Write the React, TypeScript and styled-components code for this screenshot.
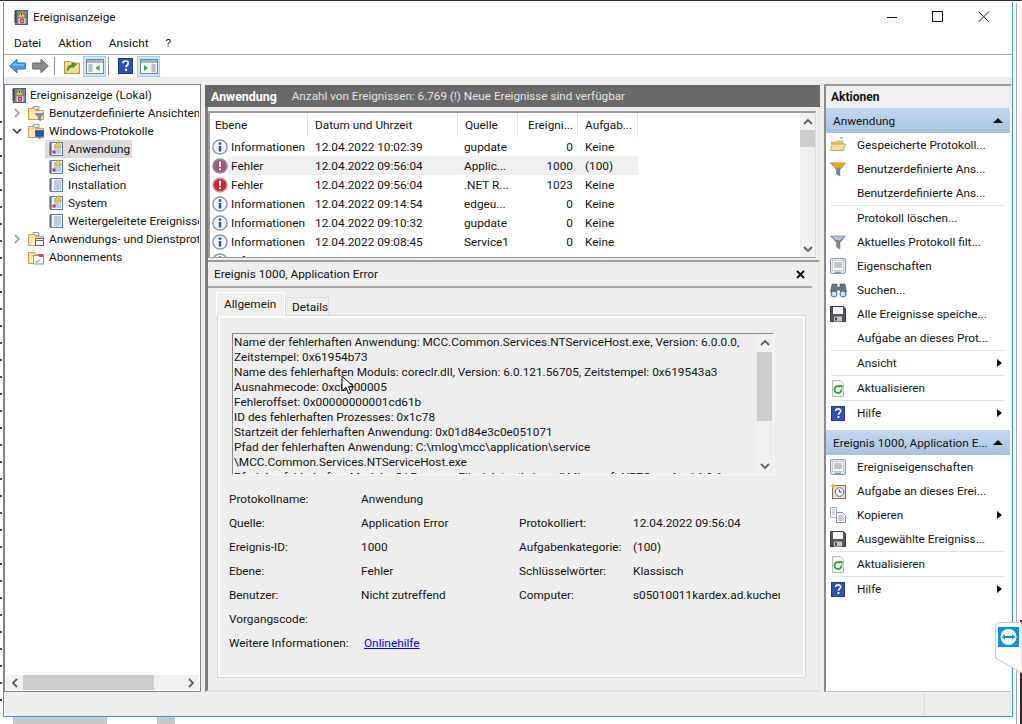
import React from "react";
import styled, { createGlobalStyle } from "styled-components";

const GlobalStyle = createGlobalStyle`
  html, body {
    margin: 0;
    background: #fff;
  }
  body {
    font-family: "Roboto", "Liberation Sans", sans-serif;
    font-size: 11.8px;
    color: #141414;
  }
`;

/* ---------- icons ---------- */

const Svg = styled.svg`
  flex: none;
  display: block;
`;

const LogIcon = ({ alert }: { alert?: boolean }) => (
  <Svg width="16" height="16" viewBox="0 0 16 16">
    <rect x="2.5" y="1.5" width="12" height="13" fill="#eef3fb" stroke="#5f7ea8" />
    <path d="M1 3h3M1 5h3M1 7h3M1 9h3M1 11h3M1 13h3" stroke="#555" />
    <path d="M6 4h7M6 6h7M6 8h7M6 10h7M6 12h7" stroke="#86a8d4" />
    {alert && (
      <>
        <path d="M10 0.5l3.500 5.500h-7z" fill="#f7d23c" stroke="#c79a1a" strokeWidth=".6" />
        <rect x="4.500" y="9.500" width="3" height="3" fill="#d0333f" />
      </>
    )}
  </Svg>
);

const ViewerIcon = () => (
  <Svg width="16" height="17" viewBox="0 0 16 17">
    <rect x="2.5" y="1.5" width="12" height="14" fill="#6f84a8" stroke="#4a5f82" />
    <path d="M1 3h3M1 5h3M1 7h3M1 9h3M1 11h3M1 13h3" stroke="#333" />
    <path d="M8.5 2l3.5 6H5z" fill="#f6cf2f" stroke="#a9851a" strokeWidth=".5" />
    <rect x="8" y="3.8" width="1" height="2.6" fill="#333" />
    <rect x="5.5" y="9.5" width="7" height="5" fill="#e6dfe0" />
    <circle cx="9" cy="12" r="2.4" fill="#cf3040" />
    <rect x="7.8" y="11.6" width="2.4" height=".9" fill="#fff" />
  </Svg>
);

const FolderBase = () => (
  <>
    <path d="M0.5 3.5h6l1.5 2h7.5v9H0.5z" fill="#f7dd94" stroke="#c6a654" />
    <path d="M1.5 7h13v6.5h-13z" fill="#fdeeb9" />
  </>
);

const FolderFilterIcon = () => (
  <Svg width="16" height="16" viewBox="0 0 16 16">
    <path d="M5 1.5h6v3H5z" fill="#dfe8f3" stroke="#8aa0bc" />
    <FolderBase />
    <path d="M7 8.5h8.5L12.5 12v3.5l-2-1V12z" fill="#7d93ad" stroke="#56697f" strokeWidth=".6" />
  </Svg>
);

const FolderLogsIcon = () => (
  <Svg width="16" height="16" viewBox="0 0 16 16">
    <path d="M5 1.5h6v3H5z" fill="#dfe8f3" stroke="#8aa0bc" />
    <FolderBase />
    <rect x="7.5" y="7.5" width="8" height="6" fill="#1f56c4" stroke="#444" strokeWidth=".6" />
    <path d="M10 14h3v1.5h-3z" fill="#777" />
  </Svg>
);

const FolderAppsIcon = () => (
  <Svg width="16" height="16" viewBox="0 0 16 16">
    <path d="M5 1.5h6v3H5z" fill="#dfe8f3" stroke="#8aa0bc" />
    <FolderBase />
    <rect x="7.5" y="7.5" width="8" height="7" fill="#fff" stroke="#666" />
    <path d="M8 9.5h7" stroke="#666" />
  </Svg>
);

const FolderSubsIcon = () => (
  <Svg width="16" height="16" viewBox="0 0 16 16">
    <FolderBase />
    <rect x="5.5" y="6.5" width="10" height="8.5" fill="#f9fbff" stroke="#8a9ab5" />
    <path d="M11 5h4v3h-4z" fill="#e2434a" />
    <path d="M7.5 12l1.5 1.5 3-3" fill="none" stroke="#3a6fc4" />
  </Svg>
);

const BackIcon = ({ color, dark }: { color: string; dark: string }) => (
  <Svg width="17" height="16" viewBox="0 0 17 16">
    <path d="M0.7 8L8 1.2V5h8.3v6H8v3.8z" fill={color} stroke={dark} />
    <path d="M3 8l4-3.7V6h8v1.5H6z" fill="#fff" opacity=".35" />
  </Svg>
);

const ForwardIcon = () => (
  <Svg width="17" height="16" viewBox="0 0 17 16">
    <path d="M16.3 8L9 1.2V5H0.7v6H9v3.8z" fill="#8b8b8b" stroke="#6a6a6a" />
  </Svg>
);

const UpFolderIcon = () => (
  <Svg width="16" height="16" viewBox="0 0 16 16">
    <path d="M0.5 3.5h6l1.5 1.5h7.5v10.5h-15z" fill="#f5d98e" stroke="#b8974a" />
    <path d="M3 13c0-4 2-6 5-6V4.5L12.5 6 9 10V8.5c-2 .2-4 2-6 4.5z" fill="#3f9e2c" stroke="#2a7a1c" strokeWidth=".5" />
  </Svg>
);

const PaneIcon = ({ side }: { side: "left" | "right" }) => (
  <Svg width="18" height="15" viewBox="0 0 18 15">
    <rect x="0.5" y="0.5" width="17" height="14" fill="#f3f6f9" stroke="#7b8794" />
    <rect x="1" y="1" width="16" height="3" fill="#aab4be" />
    {side === "left" ? (
      <>
        <path d="M2.5 6h4M2.5 8h4M2.5 10h4M2.5 12h4" stroke="#7b8da3" />
        <path d="M13.5 6v6l-4-3z" fill="#3aa53a" />
      </>
    ) : (
      <>
        <path d="M11.5 6h4M11.5 8h4M11.5 10h4M11.5 12h4" stroke="#7b8da3" />
        <path d="M4 6v6l4-3z" fill="#3aa53a" />
      </>
    )}
  </Svg>
);

const HelpIcon = ({ size = 15 }: { size?: number }) => (
  <Svg width={size} height={size + 1} viewBox="0 0 15 16">
    <rect x="0.5" y="0.5" width="14" height="15" fill="#2f50b5" stroke="#1e3585" />
    <path
      d="M5 5.3C5 3.8 6.2 3 7.6 3 9.2 3 10.3 3.9 10.3 5.3 10.3 7.2 8 7.3 8 9.3"
      fill="none"
      stroke="#fff"
      strokeWidth="1.7"
    />
    <rect x="7" y="10.8" width="2" height="2" fill="#fff" />
  </Svg>
);

const InfoIcon = () => (
  <Svg width="16" height="16" viewBox="0 0 16 16">
    <circle cx="8" cy="8" r="7.1" fill="#f5f7fb" stroke="#8a99ae" strokeWidth="1.5" />
    <circle cx="8" cy="4.6" r="1.4" fill="#2450b4" />
    <path d="M8 7v5.5" stroke="#2450b4" strokeWidth="2.5" />
  </Svg>
);

const ErrorIcon = ({ muted }: { muted?: boolean }) => (
  <Svg width="16" height="16" viewBox="0 0 16 16">
    <circle
      cx="8"
      cy="8"
      r="7.1"
      fill={muted ? "#a8566f" : "#d5242c"}
      stroke={muted ? "#8496b4" : "#b5b5b5"}
      strokeWidth="1.5"
    />
    <path d="M8 3.5V9" stroke="#fff" strokeWidth="2" />
    <rect x="7" y="10.3" width="2" height="2" fill="#fff" />
  </Svg>
);

const OpenFolderIcon = () => (
  <Svg width="16" height="16" viewBox="0 0 16 16">
    <path d="M10 1h3" stroke="#46b04a" />
    <path d="M1 5h5l1-1h6v3H1z" fill="#e8c877" stroke="#b6984f" strokeWidth=".6" />
    <path d="M0.5 13.5L2 7h13.500l-2 6.500z" fill="#f2dc9c" stroke="#b6984f" strokeWidth=".7" />
  </Svg>
);

const FunnelIcon = ({ tint }: { tint?: boolean }) => (
  <Svg width="16" height="16" viewBox="0 0 16 16">
    <path d="M0.5 2h15L10 8.5V15L6.5 13V8.5z" fill="#77889b" stroke="#5c6c7d" strokeWidth=".5" />
    {tint ? (
      <path d="M0.5 1.5h15L10.5 7h-5z" fill="#f0a11e" />
    ) : (
      <path d="M1.5 2.5h13L10.5 6h-5z" fill="#b5c4d6" />
    )}
  </Svg>
);

const PropsIcon = () => (
  <Svg width="16" height="16" viewBox="0 0 16 16">
    <rect x="0.5" y="0.5" width="15" height="15" rx="1.5" fill="#e4e9f0" stroke="#8d98a6" />
    <rect x="2.5" y="2.5" width="11" height="10" fill="#f9fafc" stroke="#a9b3c0" strokeWidth=".6" />
    <path d="M4 5h8M4 7h8M4 9h8" stroke="#8593a5" />
    <path d="M5 14.3h6" stroke="#35a8e0" strokeWidth="1.2" />
  </Svg>
);

const BinocularsIcon = () => (
  <Svg width="17" height="16" viewBox="0 0 17 16">
    <path d="M2 2h5v3h3V2h5l1.5 8h-6L10 8H7l-.5 2h-6z" fill="#6b7480" stroke="#3b424c" strokeWidth=".5" />
    <circle cx="4" cy="12" r="3" fill="#cfe0f2" stroke="#3f6fae" />
    <circle cx="13" cy="12" r="3" fill="#cfe0f2" stroke="#3f6fae" />
  </Svg>
);

const FloppyIcon = () => (
  <Svg width="16" height="16" viewBox="0 0 16 16">
    <path d="M0.5 0.5h13l2 2v13h-15z" fill="#53585f" stroke="#33373c" />
    <rect x="3" y="1" width="10" height="7" fill="#f4f5f6" />
    <rect x="4" y="10.5" width="8" height="5" fill="#c4c8cc" />
    <rect x="5" y="11.5" width="2" height="3" fill="#44484d" />
  </Svg>
);

const RefreshIcon = () => (
  <Svg width="16" height="17" viewBox="0 0 16 17">
    <path d="M2.5 0.5h8l3 3v13h-11z" fill="#f6f7f4" stroke="#b8bdb4" />
    <path d="M11.5 9.500a3.500 3.500 0 1 1-1.200-2.600" fill="none" stroke="#2f9e3c" strokeWidth="1.8" />
    <path d="M9 5h3.500v3.500z" fill="#2f9e3c" />
  </Svg>
);

const TaskIcon = () => (
  <Svg width="16" height="16" viewBox="0 0 16 16">
    <rect x="2.5" y="2.5" width="13" height="13" fill="#e9e2d4" stroke="#7d6d5a" />
    <circle cx="9.5" cy="9" r="4.3" fill="#fff" stroke="#5f6b78" />
    <path d="M9.5 6.5V9h2.200" fill="none" stroke="#444" />
    <path d="M3 0l1 2 2 .5-2 1L3 6 2 3.500 0 2.500 2 2z" fill="#f5a81c" />
  </Svg>
);

const CopyIcon = () => (
  <Svg width="16" height="16" viewBox="0 0 16 16">
    <path d="M0.5 0.5h6v10h-6z" fill="#fbfbfb" stroke="#a4a9b0" />
    <path d="M2 3h3M2 5h3M2 7h3" stroke="#b6bcc4" />
    <path d="M6.5 5.5h6l3 3v7h-9z" fill="#fff" stroke="#8c96a6" />
    <path d="M8 9h6M8 11h6M8 13h6" stroke="#87a5cc" />
  </Svg>
);

const CloseGlyph = () => (
  <Svg width="9" height="9" viewBox="0 0 9 9">
    <path d="M1 1l7 7M8 1L1 8" stroke="#111" strokeWidth="2" />
  </Svg>
);

const Chevron = ({ dir, color = "#606060" }: { dir: "up" | "down" | "left" | "right"; color?: string }) => {
  const paths = {
    up: "M1 7l4-4 4 4",
    down: "M1 3l4 4 4-4",
    left: "M7 1L3 5l4 4",
    right: "M3 1l4 4-4 4",
  };
  return (
    <Svg width="10" height="10" viewBox="0 0 10 10">
      <path d={paths[dir]} fill="none" stroke={color} strokeWidth="1.8" />
    </Svg>
  );
};

/* ---------- data ---------- */

const treeItems = [
  { level: 1, expander: "right", icon: <FolderFilterIcon />, label: "Benutzerdefinierte Ansichten" },
  { level: 1, expander: "down", icon: <FolderLogsIcon />, label: "Windows-Protokolle" },
  { level: 2, icon: <LogIcon alert />, label: "Anwendung", selected: true },
  { level: 2, icon: <LogIcon alert />, label: "Sicherheit" },
  { level: 2, icon: <LogIcon />, label: "Installation" },
  { level: 2, icon: <LogIcon alert />, label: "System" },
  { level: 2, icon: <LogIcon />, label: "Weitergeleitete Ereignisse" },
  { level: 1, expander: "right", icon: <FolderAppsIcon />, label: "Anwendungs- und Dienstprotokolle" },
  { level: 1, icon: <FolderSubsIcon />, label: "Abonnements" },
];

const events = [
  { kind: "info", level: "Informationen", date: "12.04.2022 10:02:39", source: "gupdate", id: "0", task: "Keine" },
  { kind: "error", level: "Fehler", date: "12.04.2022 09:56:04", source: "Applic...", id: "1000", task: "(100)", selected: true },
  { kind: "error", level: "Fehler", date: "12.04.2022 09:56:04", source: ".NET R...", id: "1023", task: "Keine" },
  { kind: "info", level: "Informationen", date: "12.04.2022 09:14:54", source: "edgeu...", id: "0", task: "Keine" },
  { kind: "info", level: "Informationen", date: "12.04.2022 09:10:32", source: "gupdate", id: "0", task: "Keine" },
  { kind: "info", level: "Informationen", date: "12.04.2022 09:08:45", source: "Service1", id: "0", task: "Keine" },
  { kind: "info", level: "Informationen", date: "12.04.2022 09:04:33", source: "Bonjour", id: "9007", task: "Keine" },
];

const messageLines = [
  "Name der fehlerhaften Anwendung: MCC.Common.Services.NTServiceHost.exe, Version: 6.0.0.0,",
  "Zeitstempel: 0x61954b73",
  "Name des fehlerhaften Moduls: coreclr.dll, Version: 6.0.121.56705, Zeitstempel: 0x619543a3",
  "Ausnahmecode: 0xc0000005",
  "Fehleroffset: 0x00000000001cd61b",
  "ID des fehlerhaften Prozesses: 0x1c78",
  "Startzeit der fehlerhaften Anwendung: 0x01d84e3c0e051071",
  "Pfad der fehlerhaften Anwendung: C:\\mlog\\mcc\\application\\service",
  "\\MCC.Common.Services.NTServiceHost.exe",
  "Pfad des fehlerhaften Moduls: C:\\Program Files\\dotnet\\shared\\Microsoft.NETCore.App\\6.0.1",
];

const detailRows = [
  ["Protokollname:", "Anwendung", "", ""],
  ["Quelle:", "Application Error", "Protokolliert:", "12.04.2022 09:56:04"],
  ["Ereignis-ID:", "1000", "Aufgabenkategorie:", "(100)"],
  ["Ebene:", "Fehler", "Schlüsselwörter:", "Klassisch"],
  ["Benutzer:", "Nicht zutreffend", "Computer:", "s05010011kardex.ad.kuchenmeister.de"],
  ["Vorgangscode:", "", "", ""],
];

type ActionItem = { label?: string; icon?: React.ReactNode; submenu?: boolean; separator?: boolean };

const logActions: ActionItem[] = [
  { label: "Gespeicherte Protokoll...", icon: <OpenFolderIcon /> },
  { label: "Benutzerdefinierte Ans...", icon: <FunnelIcon tint /> },
  { label: "Benutzerdefinierte Ans..." },
  { separator: true },
  { label: "Protokoll löschen..." },
  { label: "Aktuelles Protokoll filt...", icon: <FunnelIcon /> },
  { label: "Eigenschaften", icon: <PropsIcon /> },
  { label: "Suchen...", icon: <BinocularsIcon /> },
  { label: "Alle Ereignisse speiche...", icon: <FloppyIcon /> },
  { label: "Aufgabe an dieses Prot..." },
  { separator: true },
  { label: "Ansicht", submenu: true },
  { separator: true },
  { label: "Aktualisieren", icon: <RefreshIcon /> },
  { separator: true },
  { label: "Hilfe", icon: <HelpIcon size={14} />, submenu: true },
];

const eventActions: ActionItem[] = [
  { label: "Ereigniseigenschaften", icon: <PropsIcon /> },
  { label: "Aufgabe an dieses Erei...", icon: <TaskIcon /> },
  { label: "Kopieren", icon: <CopyIcon />, submenu: true },
  { label: "Ausgewählte Ereigniss...", icon: <FloppyIcon /> },
  { separator: true },
  { label: "Aktualisieren", icon: <RefreshIcon /> },
  { separator: true },
  { label: "Hilfe", icon: <HelpIcon size={14} />, submenu: true },
];

/* ---------- small parts ---------- */

const VScrollbar = ({ thumbTop, thumbHeight }: { thumbTop: number; thumbHeight: number }) => (
  <ScrollTrack>
    <ScrollArrow>
      <Chevron dir="up" />
    </ScrollArrow>
    <ScrollBody>
      <ScrollThumb style={{ marginTop: thumbTop, height: thumbHeight }} />
    </ScrollBody>
    <ScrollArrow>
      <Chevron dir="down" />
    </ScrollArrow>
  </ScrollTrack>
);

const ActionList = ({ items }: { items: ActionItem[] }) => (
  <>
    {items.map((item, i) =>
      item.separator ? (
        <ActionSeparator key={i} />
      ) : (
        <ActionRow key={i}>
          <ActionIcon>{item.icon}</ActionIcon>
          <span>{item.label}</span>
          {item.submenu && <SubmenuArrow />}
        </ActionRow>
      )
    )}
  </>
);

export default function App() {
  return (
    <Desktop>
      <GlobalStyle />
      <Window>
        <TitleBar>
          <ViewerIcon />
          <TitleText>Ereignisanzeige</TitleText>
          <WindowControls>
            <Svg width="46" height="12" viewBox="0 0 46 12">
              <path d="M18 6.5h10" stroke="#111" />
            </Svg>
            <Svg width="46" height="12" viewBox="0 0 46 12">
              <rect x="17.5" y="0.5" width="10" height="10" fill="none" stroke="#111" />
            </Svg>
            <Svg width="46" height="12" viewBox="0 0 46 12">
              <path d="M17.5 0.5L28 11M28 0.5L17.5 11" stroke="#222" />
            </Svg>
          </WindowControls>
        </TitleBar>

        <MenuBar>
          <span>Datei</span>
          <span>Aktion</span>
          <span>Ansicht</span>
          <span>?</span>
        </MenuBar>

        <ToolBar>
          <ToolButton>
            <BackIcon color="#3f9ff0" dark="#1f74c4" />
          </ToolButton>
          <ToolButton>
            <ForwardIcon />
          </ToolButton>
          <ToolSeparator />
          <ToolButton $spaced>
            <UpFolderIcon />
          </ToolButton>
          <ToolButton $active>
            <PaneIcon side="left" />
          </ToolButton>
          <ToolSeparator />
          <ToolButton $spaced>
            <HelpIcon />
          </ToolButton>
          <ToolButton $active>
            <PaneIcon side="right" />
          </ToolButton>
        </ToolBar>

        <Workspace>
          <TreePane>
            <TreeList>
              <TreeRow $indent={3}>
                <TreeEntry $gap={3}>
                  <ViewerIcon />
                  Ereignisanzeige (Lokal)
                </TreeEntry>
              </TreeRow>
              {treeItems.map((item) => (
                <TreeRow key={item.label} $indent={item.level === 1 ? 4 : 40}>
                  {item.level === 1 && (
                    <Expander>
                      {item.expander && (
                        <Chevron dir={item.expander as "right" | "down"} color={item.expander === "down" ? "#555" : "#a6a6a6"} />
                      )}
                    </Expander>
                  )}
                  <TreeEntry $gap={item.level === 1 ? 5 : 4} $selected={item.selected}>
                    {item.icon}
                    {item.label}
                  </TreeEntry>
                </TreeRow>
              ))}
            </TreeList>
            <HScrollTrack>
              <ScrollArrowH>
                <Chevron dir="left" />
              </ScrollArrowH>
              <HScrollBody>
                <HScrollThumb />
              </HScrollBody>
              <ScrollArrowH>
                <Chevron dir="right" />
              </ScrollArrowH>
            </HScrollTrack>
          </TreePane>

          <CenterPane>
            <LogHeader>
              <LogHeaderName>Anwendung</LogHeaderName>
              <LogHeaderInfo>Anzahl von Ereignissen: 6.769 (!) Neue Ereignisse sind verfügbar</LogHeaderInfo>
            </LogHeader>

            <CenterBody>
              <ListFrame>
                <ListArea>
                  <ListHeader>
                    <HeaderCell $width={98} $pad={5}>Ebene</HeaderCell>
                    <HeaderCell $width={150} $pad={7}>Datum und Uhrzeit</HeaderCell>
                    <HeaderCell $width={60} $pad={7}>Quelle</HeaderCell>
                    <HeaderCell $width={60} $pad={10}>Ereigni...</HeaderCell>
                    <HeaderCell $width={60} $pad={7}>Aufgab...</HeaderCell>
                  </ListHeader>
                  {events.map((ev, i) => (
                    <EventRow key={i}>
                      <EventIcon>
                        {ev.kind === "info" ? <InfoIcon /> : <ErrorIcon muted={ev.selected} />}
                      </EventIcon>
                      <EventCells $selected={ev.selected}>
                        <EventCell $pad={3}>{ev.level}</EventCell>
                        <EventCell $pad={7}>{ev.date}</EventCell>
                        <EventCell $pad={6}>{ev.source}</EventCell>
                        <EventCell $alignRight>{ev.id}</EventCell>
                        <EventCell $pad={7}>{ev.task}</EventCell>
                      </EventCells>
                    </EventRow>
                  ))}
                </ListArea>
                <VScrollbar thumbTop={0} thumbHeight={17} />
              </ListFrame>

              <DetailPane>
                <DetailTitle>
                  <span>Ereignis 1000, Application Error</span>
                  <CloseGlyph />
                </DetailTitle>
                <Tabs>
                  <Tab $active>Allgemein</Tab>
                  <Tab>Details</Tab>
                </Tabs>
                <TabPanel>
                  <MessageBox>
                    <MessageText>
                      {messageLines.map((line) => (
                        <div key={line}>{line}</div>
                      ))}
                    </MessageText>
                    <VScrollbar thumbTop={1} thumbHeight={69} />
                    <MousePointer width="13" height="21" viewBox="0 0 13 21">
                      <path d="M1 1v15l4-3.500 2.500 6 2.500-1-2.500-5.800h5z" fill="#fff" stroke="#000" />
                    </MousePointer>
                  </MessageBox>
                  <DetailGrid>
                    {detailRows.map((row) =>
                      row.map((text, c) => (
                        <DetailCell key={row[0] + c}>{text}</DetailCell>
                      ))
                    )}
                    <DetailCell>Weitere Informationen:</DetailCell>
                    <DetailCell>
                      <HelpLink href="#">Onlinehilfe</HelpLink>
                    </DetailCell>
                  </DetailGrid>
                </TabPanel>
              </DetailPane>
            </CenterBody>
          </CenterPane>

          <ActionsPane>
            <ActionsTitle>Aktionen</ActionsTitle>
            <SectionHeader>
              <span>Anwendung</span>
              <CollapseArrow />
            </SectionHeader>
            <ActionList items={logActions} />
            <SectionHeader $spaced>
              <span>Ereignis 1000, Application E...</span>
              <CollapseArrow />
            </SectionHeader>
            <ActionList items={eventActions} />
          </ActionsPane>
        </Workspace>

        <StatusBar>
          <StatusCell />
          <StatusCell $width={87} />
        </StatusBar>
      </Window>

      <RemoteTab>
        <svg width="27" height="52" viewBox="0 0 27 52">
          <path d="M27 0.5H4L0.5 3v33L27 51z" fill="#fff" stroke="#c8c8c8" />
          <rect x="3" y="5" width="21" height="20" fill="#0e8ee9" />
          <circle cx="13.5" cy="15" r="8" fill="#fff" />
          <path d="M6.5 15l3.500-2.500v1.500h7v-1.500l3.500 2.500-3.500 2.500V16h-7v1.500z" fill="#0e8ee9" />
        </svg>
      </RemoteTab>
    </Desktop>
  );
}

/* ---------- layout ---------- */

const Desktop = styled.div`
  position: relative;
  box-sizing: border-box;
  width: 1022px;
  height: 724px;
  overflow: hidden;
  padding: 2px 9px 7px 3px;
  background:
    linear-gradient(#26323d, #26323d) 0 0 / 100% 1px no-repeat,
    linear-gradient(#c8c8c8, #c8c8c8) 13px 717px / 94px 7px no-repeat,
    linear-gradient(#c8c8c8, #c8c8c8) 157px 717px / 18px 7px no-repeat,
    linear-gradient(#a8a8a8, #a8a8a8) 1016px 3px / 1px 100% no-repeat,
    linear-gradient(#2b2b2b, #2b2b2b) 1020px 620px / 2px 100% no-repeat,
    repeating-linear-gradient(#fff 0 15px, #444 15px 17px) 0 106px / 2px 600px no-repeat,
    #fff;
`;

const Window = styled.div`
  box-sizing: border-box;
  height: 100%;
  display: flex;
  flex-direction: column;
  background: #fff;
  border: 1px solid #3a96dd;
  border-top: none;
`;

const TitleBar = styled.div`
  height: 30px;
  flex: none;
  display: flex;
  align-items: center;
  padding-left: 9px;
  gap: 4px;
`;

const TitleText = styled.span`
  font-size: 11.8px;
`;

const WindowControls = styled.div`
  margin-left: auto;
  margin-right: 5px;
  display: flex;
`;

const MenuBar = styled.div`
  height: 22px;
  flex: none;
  display: flex;
  align-items: center;
  gap: 17px;
  padding-left: 10px;
  border-bottom: 1px solid #a6a6a6;
`;

const ToolBar = styled.div`
  height: 22px;
  flex: none;
  display: flex;
  align-items: center;
  padding-left: 2px;
`;

const ToolButton = styled.div<{ $active?: boolean; $spaced?: boolean }>`
  box-sizing: border-box;
  width: 23px;
  height: 21px;
  display: flex;
  align-items: center;
  justify-content: center;
  margin-left: ${(p) => (p.$spaced ? "5px" : "0")};
  background: ${(p) => (p.$active ? "#cce8ff" : "transparent")};
  border: 1px solid ${(p) => (p.$active ? "#99d1ff" : "transparent")};
`;

const ToolSeparator = styled.div`
  width: 1px;
  height: 18px;
  margin-left: 2px;
  background: #8f8f8f;
`;

const Workspace = styled.div`
  flex: 1;
  min-height: 0;
  display: grid;
  grid-template-columns: 197px 615px 187px;
  column-gap: 4px;
  padding-top: 7px;
  background: #eeeeee;
`;

const TreePane = styled.div`
  box-sizing: border-box;
  display: flex;
  flex-direction: column;
  background: #fff;
  border: 1px solid #7c8794;
  padding: 0 1px 1px 1px;
  min-width: 0;
`;

const TreeList = styled.div`
  flex: 1;
  min-height: 0;
  padding-top: 1px;
  overflow: hidden;
  margin-left: -1px;
`;

const TreeRow = styled.div<{ $indent: number }>`
  height: 18px;
  display: flex;
  align-items: center;
  padding-left: ${(p) => p.$indent}px;
  white-space: nowrap;
`;

const Expander = styled.div`
  width: 16px;
  display: flex;
  justify-content: center;
  flex: none;
`;

const TreeEntry = styled.div<{ $gap: number; $selected?: boolean }>`
  height: 18px;
  display: flex;
  align-items: center;
  gap: ${(p) => p.$gap}px;
  padding: ${(p) => (p.$selected ? "0 2px 0 3px" : "0 0 0 3px")};
  background: ${(p) => (p.$selected ? "#dcdcdc" : "transparent")};
`;

const HScrollTrack = styled.div`
  height: 15px;
  flex: none;
  display: flex;
  background: #f0f0f0;
`;

const ScrollArrowH = styled.div`
  width: 17px;
  flex: none;
  display: flex;
  align-items: center;
  justify-content: center;
`;

const HScrollBody = styled.div`
  flex: 1;
`;

const HScrollThumb = styled.div`
  width: 131px;
  height: 100%;
  background: #cdcdcd;
`;

const CenterPane = styled.div`
  display: flex;
  flex-direction: column;
  min-width: 0;
  min-height: 0;
`;

const LogHeader = styled.div`
  height: 22px;
  flex: none;
  margin-top: 1px;
  display: flex;
  align-items: center;
  padding-left: 6px;
  background: #696969;
  color: #fff;
`;

const LogHeaderName = styled.span`
  font-size: 12.4px;
  font-weight: 700;
`;

const LogHeaderInfo = styled.span`
  margin-left: 15px;
  font-size: 11.7px;
  color: #e2e2e2;
`;

const CenterBody = styled.div`
  flex: 1;
  min-height: 0;
  display: flex;
  flex-direction: column;
  border-left: 3px solid #7d7d7d;
  border-bottom: 2px solid #e2e2e2;
  border-right: 1px solid #e2e2e2;
`;

const ListFrame = styled.div`
  height: 147px;
  flex: none;
  box-sizing: border-box;
  display: flex;
  margin: 4px 3px 0 0;
  background: #fff;
  border: 2px solid #9c9c9c;
  border-bottom-width: 1px;
  border-right: 1px solid #dcdcdc;
  overflow: hidden;
`;

const ListArea = styled.div`
  flex: 1;
  min-width: 0;
  overflow: hidden;
`;

const ListHeader = styled.div`
  height: 24px;
  display: flex;
`;

const HeaderCell = styled.div<{ $width: number; $pad: number }>`
  box-sizing: border-box;
  width: ${(p) => p.$width}px;
  padding-left: ${(p) => p.$pad}px;
  line-height: 24px;
  border-right: 1px solid #e5e5e5;
  white-space: nowrap;
  overflow: hidden;
`;

const EventRow = styled.div`
  height: 19px;
  display: flex;
`;

const EventIcon = styled.div`
  width: 18px;
  flex: none;
  display: flex;
  align-items: center;
  justify-content: flex-end;
`;

const EventCells = styled.div<{ $selected?: boolean }>`
  display: grid;
  grid-template-columns: 80px 150px 60px 60px 60px;
  align-items: center;
  background: ${(p) => (p.$selected ? "#f0f0f0" : "transparent")};
`;

const EventCell = styled.div<{ $pad?: number; $alignRight?: boolean }>`
  padding-left: ${(p) => p.$pad ?? 0}px;
  padding-right: ${(p) => (p.$alignRight ? "5px" : "0")};
  text-align: ${(p) => (p.$alignRight ? "right" : "left")};
  white-space: nowrap;
`;

const ScrollTrack = styled.div`
  width: 15px;
  flex: none;
  display: flex;
  flex-direction: column;
  background: #f0f0f0;
`;

const ScrollArrow = styled.div`
  height: 17px;
  flex: none;
  display: flex;
  align-items: center;
  justify-content: center;
`;

const ScrollBody = styled.div`
  flex: 1;
`;

const ScrollThumb = styled.div`
  background: #cdcdcd;
`;

const DetailPane = styled.div`
  flex: 1;
  min-height: 0;
  display: flex;
  flex-direction: column;
  margin-top: 2px;
  border-top: 2px solid #9c9c9c;
`;

const DetailTitle = styled.div`
  height: 24px;
  flex: none;
  box-sizing: content-box;
  display: flex;
  align-items: center;
  justify-content: space-between;
  margin-right: 7px;
  padding: 0 7px 0 6px;
  border-bottom: 2px solid #a9a9a9;
`;

const Tabs = styled.div`
  height: 23px;
  flex: none;
  display: flex;
  align-items: flex-end;
  margin: 4px 0 0 8px;
  position: relative;
  z-index: 1;
`;

const Tab = styled.div<{ $active?: boolean }>`
  box-sizing: border-box;
  height: ${(p) => (p.$active ? "24px" : "18px")};
  margin-bottom: ${(p) => (p.$active ? "-1px" : "0")};
  width: ${(p) => (p.$active ? "69px" : "44px")};
  padding-left: ${(p) => (p.$active ? "7px" : "6px")};
  line-height: ${(p) => (p.$active ? "23px" : "18px")};
  background: ${(p) => (p.$active ? "#f0f0f0" : "#eeeeee")};
  border: 1px solid ${(p) => (p.$active ? "#fff" : "#dedede")};
  border-bottom: none;
`;

const TabPanel = styled.div`
  flex: 1;
  min-height: 0;
  box-sizing: border-box;
  margin: 0 13px 12px 9px;
  padding: 17px 0 0 14px;
  border: 1px solid #d8d8d8;
  box-shadow: inset 0 0 0 2px #fbfbfb;
`;

const MessageBox = styled.div`
  position: relative;
  box-sizing: border-box;
  width: 542px;
  height: 142px;
  display: flex;
  border: 1px solid;
  border-color: #8a8a8a #f8f8f8 #f8f8f8 #8a8a8a;
  padding-right: 1px;
`;

const MessageText = styled.div`
  flex: 1;
  min-width: 0;
  overflow: hidden;
  padding: 1px 0 0 1px;
  line-height: 15px;
  white-space: nowrap;
`;

const MousePointer = styled.svg`
  position: absolute;
  left: 108px;
  top: 41px;
`;

const DetailGrid = styled.div`
  display: grid;
  grid-template-columns: 132px 158px 114px 147px;
  grid-auto-rows: 24px;
  align-items: center;
  margin: 12px 0 0 -3px;
`;

const DetailCell = styled.div`
  white-space: nowrap;
  overflow: hidden;
`;

const HelpLink = styled.a`
  margin-left: 3px;
  color: #0000ee;
`;

const ActionsPane = styled.div`
  box-sizing: border-box;
  display: flex;
  flex-direction: column;
  background: #fff;
  border-top: 2px solid #9c9c9c;
  border-left: 2px solid #8a8a8a;
  border-bottom: 1px solid #c8c8c8;
  min-height: 0;
  overflow: hidden;
`;

const ActionsTitle = styled.div`
  height: 22px;
  flex: none;
  padding-left: 5px;
  line-height: 22px;
  font-size: 12px;
  font-weight: 700;
  background: #f0f0f0;
`;

const SectionHeader = styled.div<{ $spaced?: boolean }>`
  height: 25px;
  flex: none;
  display: flex;
  align-items: center;
  justify-content: space-between;
  margin: ${(p) => (p.$spaced ? "5px" : "0")} 1px 0 0;
  padding: 0 7px 0 7px;
  background: linear-gradient(#c6d9ed, #a5c2df);
  white-space: nowrap;
`;

const CollapseArrow = styled.div`
  width: 0;
  height: 0;
  border-left: 5px solid transparent;
  border-right: 5px solid transparent;
  border-bottom: 5px solid #111;
`;

const ActionRow = styled.div`
  height: 24px;
  flex: none;
  display: flex;
  align-items: center;
  padding: 0 9px 0 4px;
  white-space: nowrap;
`;

const ActionIcon = styled.div`
  width: 16px;
  flex: none;
  margin-right: 11px;
  display: flex;
  justify-content: center;
`;

const SubmenuArrow = styled.div`
  margin-left: auto;
  width: 0;
  height: 0;
  border-top: 4px solid transparent;
  border-bottom: 4px solid transparent;
  border-left: 5px solid #111;
`;

const ActionSeparator = styled.div`
  height: 1px;
  flex: none;
  margin: 0 6px 0 5px;
  background: #e4e4e4;
`;

const StatusBar = styled.div`
  height: 24px;
  flex: none;
  display: flex;
  background: #eeeeee;
`;

const StatusCell = styled.div<{ $width?: number }>`
  flex: ${(p) => (p.$width ? `0 0 ${p.$width}px` : "1")};
  border-left: ${(p) => (p.$width ? "1px solid #dcdcdc" : "none")};
`;

const RemoteTab = styled.div`
  position: absolute;
  left: 995px;
  top: 622px;
  line-height: 0;
`;
